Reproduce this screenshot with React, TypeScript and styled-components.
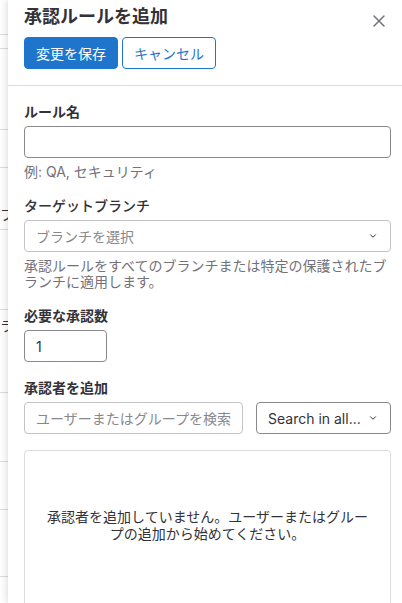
import styled, { createGlobalStyle } from "styled-components";

const GlobalStyle = createGlobalStyle`
  html, body {
    margin: 0;
    padding: 0;
    background: #ffffff;
    font-family: "Inter", "Noto Sans CJK JP", sans-serif;
    color: #333238;
  }
  * { box-sizing: border-box; }
`;

const Page = styled.div`
  position: relative;
  width: 402px;
  height: 603px;
  overflow: hidden;
  background: #fff;
`;

// rows of the page behind the drawer
const BgRow = styled.div<{ h: number; pad?: number }>`
  height: ${(p) => p.h}px;
  border-bottom: 1px solid #dcdcde;
  font-size: 14px;
  line-height: 20px;
  padding-top: ${(p) => p.pad ?? 0}px;
  color: #333238;
  white-space: nowrap;
`;

const Drawer = styled.aside`
  position: absolute;
  top: 0;
  left: 8px;
  right: 0;
  bottom: 0;
  background: #fff;
  box-shadow: -2px 0 6px rgba(0, 0, 0, 0.12);
  display: flex;
  flex-direction: column;
`;

const Header = styled.header`
  padding: 3px 11px 16px 16px;
  border-bottom: 1px solid #dcdcde;
  display: flex;
  flex-direction: column;
  gap: 6px;
`;

const TitleRow = styled.div`
  display: flex;
  align-items: center;
  justify-content: space-between;
  height: 28px;
`;

const Title = styled.h2`
  margin: 0;
  font-size: 18px;
  line-height: 24px;
  font-weight: 700;
  color: #333238;
`;

const CloseButton = styled.button`
  border: none;
  background: transparent;
  padding: 0;
  width: 16px;
  height: 16px;
  margin: 8px 4px 0 0;
  display: flex;
  align-items: center;
  justify-content: center;
`;

const Actions = styled.div`
  display: flex;
  gap: 4px;
`;

const Button = styled.button<{ primary?: boolean }>`
  height: 32px;
  padding: 0 11px;
  min-width: 94px;
  white-space: nowrap;
  border-radius: 4px;
  font-family: inherit;
  font-size: 14px;
  border: 1px solid #1f75cb;
  background: ${(p) => (p.primary ? "#1f75cb" : "#fff")};
  color: ${(p) => (p.primary ? "#fff" : "#1f75cb")};
`;

const Body = styled.div`
  padding: 16px 11px 0 16px;
  display: flex;
  flex-direction: column;
  gap: 16px;
`;

const Group = styled.div`
  display: flex;
  flex-direction: column;
`;

const Label = styled.label<{ light?: boolean }>`
  font-size: 14px;
  line-height: 20px;
  font-weight: ${(p) => (p.light ? 500 : 700)};
  margin-bottom: 4px;
  color: #333238;
`;

const TextInput = styled.input<{ w?: number; soft?: boolean }>`
  height: 32px;
  width: ${(p) => (p.w ? `${p.w}px` : "100%")};
  flex-shrink: 0;
  border: 1px solid ${(p) => (p.soft ? "#c4c4c8" : "#89888d")};
  border-radius: 4px;
  padding: 0 11px;
  font-family: inherit;
  font-size: 14px;
  color: #333238;
  background: #fff;
  outline: none;
  &::placeholder {
    color: #89888d;
  }
`;

const Select = styled.div<{ soft?: boolean; w?: number }>`
  height: 32px;
  width: ${(p) => (p.w ? `${p.w}px` : "100%")};
  flex-shrink: 0;
  border: 1px solid ${(p) => (p.soft ? "#c4c4c8" : "#89888d")};
  border-radius: 4px;
  padding: 0 12px 0 11px;
  display: flex;
  align-items: center;
  justify-content: space-between;
  font-size: 14px;
`;

const SelectText = styled.span<{ placeholder?: boolean }>`
  color: ${(p) => (p.placeholder ? "#89888d" : "#333238")};
  white-space: nowrap;
`;

const Help = styled.p`
  margin: 6px 0 0;
  font-size: 14px;
  line-height: 16px;
  color: #737278;
`;

const SearchRow = styled.div`
  display: flex;
  justify-content: space-between;
`;

const EmptyBox = styled.div`
  height: 180px;
  border: 1px solid #dcdcde;
  border-radius: 4px;
  display: flex;
  align-items: center;
  justify-content: center;
  padding: 0 20px 30px;
  text-align: center;
  font-size: 14px;
  line-height: 17px;
  color: #333238;
`;

const Chevron = () => (
  <svg width="10" height="10" viewBox="0 0 16 16" fill="none">
    <path d="M4 6l4 4 4-4" stroke="#333238" strokeWidth="1.6" strokeLinecap="round" strokeLinejoin="round" />
  </svg>
);

const CloseIcon = () => (
  <svg width="12" height="12" viewBox="0 0 12 12" fill="none">
    <path d="M1 1l10 10M11 1L1 11" stroke="#737278" strokeWidth="1.5" strokeLinecap="round" />
  </svg>
);

const bgRows: { h: number; text?: string; pad?: number }[] = [
  { h: 35 },
  { h: 14 },
  { h: 81 },
  { h: 38 },
  { h: 62, text: "フ", pad: 37 },
  { h: 80 },
  { h: 83, text: "ラ", pad: 6 },
  { h: 69 },
  { h: 48 },
  { h: 67 },
  { h: 30 },
];

export default function App() {
  return (
    <Page>
      <GlobalStyle />
      {bgRows.map((r, i) => (
        <BgRow key={i} h={r.h} pad={r.pad}>
          {r.text ?? ""}
        </BgRow>
      ))}
      <Drawer>
        <Header>
          <TitleRow>
            <Title>承認ルールを追加</Title>
            <CloseButton aria-label="閉じる">
              <CloseIcon />
            </CloseButton>
          </TitleRow>
          <Actions>
            <Button primary>変更を保存</Button>
            <Button>キャンセル</Button>
          </Actions>
        </Header>
        <Body>
          <Group>
            <Label>ルール名</Label>
            <TextInput />
            <Help>例: QA, セキュリティ</Help>
          </Group>
          <Group>
            <Label light>ターゲットブランチ</Label>
            <Select soft>
              <SelectText placeholder>ブランチを選択</SelectText>
              <Chevron />
            </Select>
            <Help>承認ルールをすべてのブランチまたは特定の保護されたブランチに適用します。</Help>
          </Group>
          <Group>
            <Label>必要な承認数</Label>
            <TextInput w={83} defaultValue="1" />
          </Group>
          <Group>
            <Label>承認者を追加</Label>
            <SearchRow>
              <TextInput w={219} soft placeholder="ユーザーまたはグループを検索" />
              <Select w={135}>
                <SelectText>Search in all...</SelectText>
                <Chevron />
              </Select>
            </SearchRow>
          </Group>
          <EmptyBox>承認者を追加していません。ユーザーまたはグループの追加から始めてください。</EmptyBox>
        </Body>
      </Drawer>
    </Page>
  );
}
